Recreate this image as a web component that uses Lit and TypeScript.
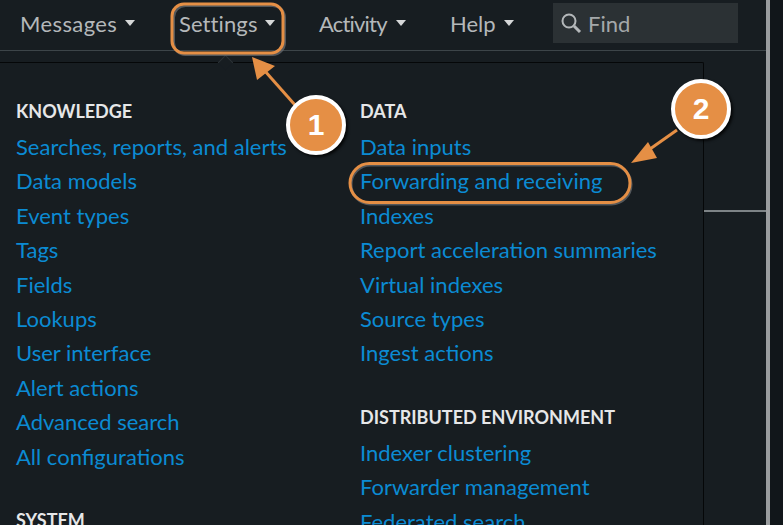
import { LitElement, html, css, svg } from 'lit';
import { customElement } from 'lit/decorators.js';

const navItems = [
  { label: 'Messages', width: 115, tracking: 0.4 },
  { label: 'Settings', width: 96, tracking: 0.1 },
  { label: 'Activity', width: 87, tracking: -0.8 },
  { label: 'Help', width: 64, tracking: 0 },
];

const columns = [
  [
    { title: 'KNOWLEDGE', links: ['Searches, reports, and alerts', 'Data models', 'Event types', 'Tags', 'Fields', 'Lookups', 'User interface', 'Alert actions', 'Advanced search', 'All configurations'] },
    { title: 'SYSTEM', links: ['Server settings'] },
  ],
  [
    { title: 'DATA', links: ['Data inputs', 'Forwarding and receiving', 'Indexes', 'Report acceleration summaries', 'Virtual indexes', 'Source types', 'Ingest actions'] },
    { title: 'DISTRIBUTED ENVIRONMENT', links: ['Indexer clustering', 'Forwarder management', 'Federated search'] },
  ],
];

@customElement('app-root')
export class AppRoot extends LitElement {
  static styles = css`
    :host {
      display: block;
      position: relative;
      width: 783px;
      height: 525px;
      overflow: hidden;
      background: #11161a;
      font-family: Lato, 'Liberation Sans', sans-serif;
    }

    .page {
      display: flex;
      height: 525px;
    }

    .main {
      width: 766px;
      background: #171d21;
      flex: none;
    }

    .scrollbar {
      width: 4px;
      flex: none;
      background: #9a9d9f;
    }

    .nav {
      display: flex;
      align-items: center;
      gap: 44px;
      height: 51px;
      padding: 0 0 4px 20px;
      box-sizing: border-box;
      border-bottom: 1px solid #3d4549;
      color: #b4b8ba;
      font-size: 22px;
    }

    .nav-item {
      display: flex;
      align-items: center;
      justify-content: space-between;
      flex: none;
    }

    .caret {
      width: 10px;
      height: 6px;
    }

    .find {
      display: flex;
      align-items: center;
      gap: 6px;
      width: 185px;
      height: 40px;
      margin-left: -5px;
      padding-left: 7px;
      box-sizing: border-box;
      background: #2b3134;
      color: #a4a8aa;
    }

    .body {
      display: flex;
      margin-top: 11px;
      height: 463px;
    }

    .menu {
      position: relative;
      display: grid;
      grid-template-columns: 344px 1fr;
      width: 704px;
      flex: none;
      box-sizing: border-box;
      padding: 37px 0 0 16px;
      border-top: 1px solid #050708;
      border-right: 1px solid #050708;
      border-top-right-radius: 2px;
    }

    .notch {
      position: absolute;
      left: 220px;
      top: -6px;
      width: 10px;
      height: 10px;
      background: #171d21;
      border-top: 1px solid #2c3236;
      border-left: 1px solid #2c3236;
      transform: rotate(45deg);
    }

    .section {
      margin-bottom: 35px;
    }

    .section h3 {
      margin: 0 0 8px;
      font-size: 18px;
      line-height: 22px;
      font-weight: 700;
      color: #e6e7e8;
    }

    .section a {
      display: block;
      height: 34.4px;
      line-height: 34.4px;
      font-size: 22px;
      white-space: nowrap;
      color: #0b8bd3;
    }

    .side {
      flex: 1;
    }

    .side-line {
      height: 2px;
      margin: 148px -4px 0 0;
      background: #7d8386;
    }

    .overlay {
      position: absolute;
      left: 0;
      top: 0;
    }

    .badge {
      position: absolute;
      width: 60px;
      height: 60px;
      display: flex;
      align-items: center;
      justify-content: center;
      box-sizing: border-box;
      border: 4px solid #fff;
      border-radius: 50%;
      background: #e58f45;
      color: #fff;
      font-family: 'Liberation Sans', sans-serif;
      font-size: 30px;
      font-weight: 700;
      box-shadow: 2px 2px 3px rgba(0, 0, 0, 0.8);
    }

    .badge.one {
      left: 286px;
      top: 95px;
    }

    .badge.two {
      left: 671px;
      top: 79px;
    }
  `;

  private caret() {
    return html`<svg class="caret" viewBox="0 0 10 6"><path d="M0 0h10L5 6z" fill="#d6d8d9" /></svg>`;
  }

  private annotations() {
    return svg`
      <g fill="none" stroke="#6d7074" stroke-width="3" opacity="0.7">
        <rect x="173.500" y="5.500" width="111" height="49" rx="12" />
        <rect x="351" y="165" width="280" height="39" rx="19.500" />
      </g>
      <g fill="none" stroke="#e58f45" stroke-width="3">
        <rect x="172" y="4" width="111" height="49" rx="12" />
        <rect x="350" y="163.500" width="280" height="39" rx="19.500" />
      </g>
      <g stroke="#e58f45" stroke-width="3" fill="#e58f45">
        <line x1="295" y1="105" x2="264" y2="70" />
        <line x1="677" y1="130" x2="650" y2="149" />
      </g>
      <polygon points="252,57 275,66 257,80" fill="#e58f45" />
      <polygon points="631,163 648,142 657,158" fill="#e58f45" />
    `;
  }

  render() {
    return html`
      <div class="page">
        <div class="main">
          <div class="nav">
            ${navItems.map(
              (item) => html`<div class="nav-item" style="width: ${item.width}px; letter-spacing: ${item.tracking}px">
                ${item.label}${this.caret()}
              </div>`
            )}
            <div class="find">
              <svg width="22" height="22" viewBox="0 0 22 22" fill="none" stroke="#b4b8ba">
                <circle cx="9" cy="9" r="6.500" stroke-width="2" />
                <path d="M14 14l6 6" stroke-width="3" />
              </svg>
              Find
            </div>
          </div>
          <div class="body">
            <div class="menu">
              <div class="notch"></div>
              ${columns.map(
                (col) => html`<div>
                  ${col.map(
                    (sec) => html`<div class="section">
                      <h3>${sec.title}</h3>
                      ${sec.links.map((l) => html`<a>${l}</a>`)}
                    </div>`
                  )}
                </div>`
              )}
            </div>
            <div class="side"><div class="side-line"></div></div>
          </div>
        </div>
        <div class="scrollbar"></div>
      </div>
      <svg class="overlay" width="783" height="525">${this.annotations()}</svg>
      <div class="badge one">1</div>
      <div class="badge two">2</div>
    `;
  }
}
